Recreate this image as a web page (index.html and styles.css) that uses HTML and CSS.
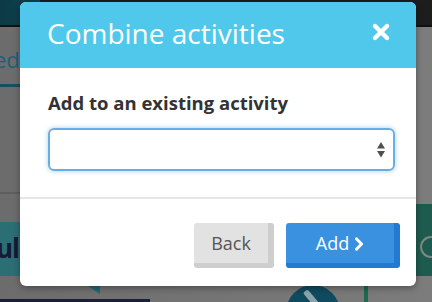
FILE: index.html
```html
<!DOCTYPE html>
<html>
<head>
<meta charset="utf-8">
<link rel="stylesheet" href="styles.css">
</head>
<body>
<div class="page">
  <div class="bg-top"></div>
  <div class="bg-top-left"></div>
  <div class="bg-text-ed">ed</div>
  <div class="bg-line-teal"></div>
  <div class="bg-line-gray"></div>
  <div class="bg-band-left"><span class="bg-text-ule">ule</span></div>
  <div class="bg-tri"></div>
  <div class="bg-bottom-line"></div>
  <div class="bg-band-right"><span class="bg-ring"></span></div>
  <div class="bg-circle"><span class="bg-slash"></span></div>
  <div class="bg-green-line"></div>

  <div class="overlay">
    <div class="modal">
      <div class="modal-header">
        <h1 class="modal-title">Combine activities</h1>
        <button class="close" aria-label="Close">
          <svg width="18" height="18" viewBox="0 0 18 18"><path d="M3 3 L15 15 M15 3 L3 15" stroke="#fff" stroke-width="4.4" stroke-linecap="round"/></svg>
        </button>
      </div>
      <div class="modal-body">
        <label class="field-label">Add to an existing activity</label>
        <div class="select">
          <svg class="arrows" width="8" height="16" viewBox="0 0 8 16"><path d="M4 0 L8 6.5 L0 6.5 Z M0 9 L8 9 L4 15.5 Z" fill="#505050"/></svg>
        </div>
      </div>
      <div class="modal-footer">
        <button class="btn btn-back">Back</button>
        <button class="btn btn-add">Add<svg class="chev" width="10" height="14" viewBox="0 0 10 14"><path d="M2.5 1.8 L7.5 7 L2.5 12.2" fill="none" stroke="#fff" stroke-width="3" stroke-linecap="round" stroke-linejoin="round"/></svg></button>
      </div>
    </div>
  </div>
</div>
</body>
</html>
```
FILE: styles.css
```css
* { box-sizing: border-box; }
html, body { margin: 0; padding: 0; }
body {
  width: 432px;
  height: 302px;
  overflow: hidden;
  font-family: "Open Sans", "DejaVu Sans", sans-serif;
}
.page {
  position: relative;
  width: 432px;
  height: 302px;
  background: linear-gradient(90deg, #6c6c6c 0%, #747474 50%, #7c7c7c 100%);
  overflow: hidden;
}
.bg-top { position: absolute; left: 0; top: 0; width: 432px; height: 27px; background: #1d1d1d; border-bottom: 2px solid #111; }
.bg-top-left { position: absolute; left: 0; top: 0; width: 40px; height: 25px; background: linear-gradient(90deg, #0c3a46, #0f4350); }
.bg-text-ed { position: absolute; left: -6px; top: 44px; font-size: 22px; color: #1b6278; font-family: "Open Sans", sans-serif; }
.bg-line-teal { position: absolute; left: 0; top: 84px; width: 40px; height: 3px; background: #174f5f; }
.bg-line-gray { position: absolute; left: 0; top: 192px; width: 40px; height: 2px; background: #5e5e5e; }
.bg-band-left { position: absolute; left: 0; top: 222px; width: 40px; height: 54px; background: #2b6e74; overflow: hidden; }
.bg-text-ule { position: absolute; left: -4px; top: 8px; font-size: 26px; font-weight: 700; color: #151a36; letter-spacing: -1px; }
.bg-tri { position: absolute; left: 88px; top: 286px; width: 0; height: 0; border-left: 12px solid transparent; border-top: 8px solid #1f6a72; }
.bg-bottom-line { position: absolute; left: 0; top: 299px; width: 150px; height: 3px; background: #1b1f36; }
.bg-band-right { position: absolute; left: 416px; top: 204px; width: 16px; height: 72px; background: #1e5b4f; }
.bg-ring { position: absolute; left: 4px; top: 32px; width: 22px; height: 22px; border: 2px solid #7d8883; border-radius: 50%; }
.bg-circle { position: absolute; left: 286px; top: 285px; width: 54px; height: 54px; border-radius: 50%; background: #0f4a5e; overflow: hidden; }
.bg-slash { position: absolute; left: 22px; top: 4px; width: 6px; height: 18px; background: #8aa3aa; transform: rotate(-40deg); border-radius: 2px; }
.bg-green-line { position: absolute; left: 364px; top: 286px; width: 4px; height: 16px; background: #1d6a4f; }

.overlay {
  position: absolute;
  inset: 0;
  padding: 2px 0 0 20px;
}
.modal {
  width: 396px;
  height: 284px;
  background: #fff;
  border-radius: 6px;
  overflow: hidden;
  box-shadow: 0 2px 6px rgba(0,0,0,0.35);
  display: flex;
  flex-direction: column;
}
.modal-header {
  height: 66px;
  background: #50c8ec;
  display: flex;
  align-items: center;
  justify-content: space-between;
  padding: 0 26px 0 27px;
  flex: none;
}
.modal-title {
  margin: -5px 0 0 0;
  font-size: 28px;
  font-weight: 400;
  color: #fff;
  line-height: 1;
}
.close {
  background: none;
  border: 0;
  padding: 0;
  width: 18px;
  height: 18px;
  display: flex;
  margin-top: -6px;
}
.modal-body {
  padding: 24px 21px 0 28px;
  height: 131px;
  border-bottom: 2px solid #e6e6e6;
  flex: none;
}
.field-label {
  display: block;
  font-size: 18.5px;
  font-weight: 700;
  color: #333;
  line-height: 22px;
  margin-bottom: 14px;
}
.select {
  height: 43px;
  border: 2px solid #67aee9;
  border-radius: 6px;
  box-shadow: 0 0 5px rgba(102,175,233,0.6);
  display: flex;
  align-items: center;
  justify-content: flex-end;
  padding-right: 8px;
}
.modal-footer {
  display: flex;
  justify-content: flex-end;
  gap: 12px;
  padding: 24px 16px 0 0;
}
.btn {
  height: 45px;
  border: 0;
  border-radius: 3px;
  font-family: "Open Sans", sans-serif;
  font-size: 18px;
  display: flex;
  align-items: center;
  justify-content: center;
  padding: 0;
}
.btn-back {
  width: 80px;
  background: #e2e2e2;
  color: #555;
  border-right: 6px solid #cecece;
  border-bottom: 5px solid #cecece;
}
.btn-add {
  width: 114px;
  background: #3991e0;
  color: #fff;
  border-right: 6px solid #2479d1;
  border-bottom: 5px solid #2479d1;
  gap: 5px;
}
.chev { display: block; margin-top: 1px; }
```
